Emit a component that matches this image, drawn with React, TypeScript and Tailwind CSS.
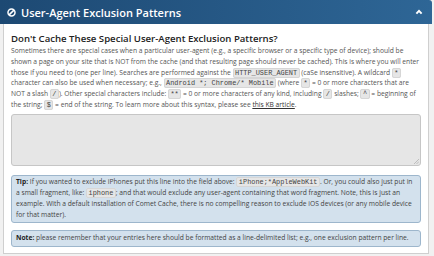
const code = 'font-["Liberation_Mono",monospace] text-[6.9px] leading-none bg-[#e6e6e6] border border-[#d6d6d6] rounded-[2px] px-[1.5px] text-[#444]';

function Code({ children }: { children: React.ReactNode }) {
  return <code className={code}>{children}</code>;
}

export default function App() {
  return (
    <div className="w-[434px] h-[256px] bg-[#f1f1f1] font-['Open_Sans',sans-serif] text-[#333] overflow-hidden">
      <div className="w-[432px]">
        {/* Header */}
        <div className="h-[24px] flex items-center justify-between pl-[7px] pr-[9px] bg-gradient-to-r from-[#1d4973] to-[#2e6696] rounded-tr-[3px]">
          <div className="flex items-center gap-[5px]">
            <svg width="9" height="9" viewBox="0 0 12 12" fill="none" stroke="white" strokeWidth="2">
              <circle cx="6" cy="6" r="4.7" />
              <line x1="2.8" y1="9.2" x2="9.2" y2="2.8" />
            </svg>
            <span className="text-white text-[11px] font-semibold leading-none">User-Agent Exclusion Patterns</span>
          </div>
          <svg width="8" height="6" viewBox="0 0 10 8" fill="none" stroke="white" strokeWidth="2.6">
            <polyline points="1.5,6.2 5,2.5 8.5,6.2" />
          </svg>
        </div>

        {/* Body */}
        <div className="mx-[3px] bg-white border border-t-0 border-[#cfcfcf] px-[7px] pt-[8px] pb-[6px]">
          <h3 className="text-[9.6px] font-semibold text-[#222] leading-[13px] mb-[1px]">
            Don't Cache These Special User-Agent Exclusion Patterns?
          </h3>
          <p className="text-[6.7px] leading-[10.8px] text-[#555]">
            Sometimes there are special cases when a particular user-agent (e.g., a specific browser or a specific type of device); should be shown a page on your site that is NOT from the cache (and that resulting page should never be cached). This is where you will enter those if you need to (one per line). Searches are performed against the <Code>HTTP_USER_AGENT</Code> (caSe insensitive). A wildcard <Code>*</Code> character can also be used when necessary; e.g., <Code>Android *; Chrome/* Mobile</Code> (where <Code>*</Code> = 0 or more characters that are NOT a slash <Code>/</Code>). Other special characters include: <Code>**</Code> = 0 or more characters of any kind, including <Code>/</Code> slashes; <Code>^</Code> = beginning of the string; <Code>$</Code> = end of the string. To learn more about this syntax, please see <a className="underline text-[#333]">this KB article</a>.
          </p>

          <div className="mt-[3px] h-[52px] bg-[#e6e6e6] border border-[#c6c6c6] rounded-[3px] relative">
            <svg width="5" height="5" viewBox="0 0 5 5" className="absolute right-[1px] bottom-[1px]" stroke="#aaa" strokeWidth="0.7">
              <line x1="0" y1="5" x2="5" y2="0" />
              <line x1="2.5" y1="5" x2="5" y2="2.5" />
            </svg>
          </div>

          <div className="mt-[9px] bg-[#d3e1ed] border border-[#9db6cc] rounded-[3px] px-[4px] py-[1.5px] text-[6.7px] leading-[10.8px] text-[#444]">
            <b className="text-[#222]">Tip:</b> If you wanted to exclude iPhones put this line into the field above: <Code>iPhone;*AppleWebKit</Code>. Or, you could also just put in a small fragment, like: <Code>iphone</Code>; and that would exclude any user-agent containing that word fragment. Note, this is just an example. With a default installation of Comet Cache, there is no compelling reason to exclude iOS devices (or any mobile device for that matter).
          </div>

          <div className="mt-[7px] bg-[#d3e1ed] border border-[#9db6cc] rounded-[3px] px-[4px] py-[2px] text-[6.7px] leading-[10.8px] text-[#444]">
            <b className="text-[#222]">Note:</b> please remember that your entries here should be formatted as a line-delimited list; e.g., one exclusion pattern per line.
          </div>
        </div>
      </div>
    </div>
  );
}
